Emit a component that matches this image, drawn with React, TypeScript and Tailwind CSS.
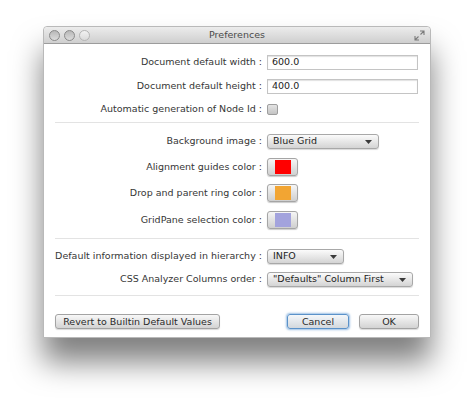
import React from 'react';

const font = { fontFamily: '"DejaVu Sans", Verdana, sans-serif' };

function Label({ children }: { children: React.ReactNode }) {
    return <div className="w-[223px] shrink-0 pr-[5px] text-right text-[#363636] whitespace-nowrap">{children} :</div>;
}

function Select({ value, width }: { value: string; width: string }) {
    return (
        <div className={`${width} h-[15px] flex items-center justify-between pl-[5px] pr-[6px] rounded-[3px] border border-[#a8a8a8] bg-gradient-to-b from-[#fbfbfb] to-[#d4d4d4] shadow-[0_1px_1px_rgba(0,0,0,0.15)] text-[#222]`}>
            <span>{value}</span>
            <svg width="7" height="4" viewBox="0 0 7 4"><path d="M0 0h7L3.5 4z" fill="#3a3a3a" /></svg>
        </div>
    );
}

function Swatch({ color }: { color: string }) {
    return (
        <div className="w-[31px] h-[18px] flex items-center justify-center rounded-[3px] border border-[#a5a5a5] bg-gradient-to-b from-[#f6f6f6] to-[#cfcfcf] shadow-[0_1px_1px_rgba(0,0,0,0.2)]">
            <div className="w-[16px] h-[14px]" style={{ backgroundColor: color }} />
        </div>
    );
}

function Field({ value }: { value: string }) {
    return (
        <div className="w-[151px] h-[15px] flex items-center pl-[4px] bg-white border border-[#c4c4c4] shadow-[inset_0_1px_1px_rgba(0,0,0,0.12)] text-[#222]">
            {value}
        </div>
    );
}

function Sep() {
    return <div className="mx-[11px] h-px bg-[#e3e3e3]" />;
}

function Light({ faint }: { faint?: boolean }) {
    return (
        <div
            className={`w-[11px] h-[11px] rounded-full border ${faint ? 'border-[#b5b5b5] bg-gradient-to-b from-[#f2f2f2] to-[#dadada]' : 'border-[#8a8a8a] bg-gradient-to-b from-[#b8b8b8] to-[#dcdcdc]'}`}
        />
    );
}

export default function App() {
    return (
        <div className="w-[474px] h-[399px] bg-white pt-[26px] pl-[43px] text-[9.5px]" style={font}>
            <div className="w-[388px] h-[312px] flex flex-col bg-white border border-[#b9b9b9] rounded-t-[4px] shadow-[0_24px_30px_rgba(0,0,0,0.5)]">
                <div className="h-[17px] shrink-0 relative flex items-center justify-center rounded-t-[4px] bg-gradient-to-b from-[#ececec] to-[#cfcfcf] border-b border-[#9c9c9c]">
                    <div className="absolute left-[5px] top-[3px] flex gap-[4px]">
                        <Light />
                        <Light />
                        <Light faint />
                    </div>
                    <span className="text-[#4a4a4a] text-[9.5px]">Preferences</span>
                    <svg className="absolute right-[5px] top-[3px]" width="11" height="11" viewBox="0 0 11 11">
                        <path d="M6 1h4v4M10 1L6.5 4.5M5 10H1V6M1 10l3.5-3.5" stroke="#7a7a7a" strokeWidth="1.1" fill="none" />
                    </svg>
                </div>

                <div className="flex flex-col pt-[11px]">
                    <div className="flex items-center h-[15px]">
                        <Label>Document default width</Label>
                        <Field value="600.0" />
                    </div>
                    <div className="flex items-center h-[15px] mt-[9px]">
                        <Label>Document default height</Label>
                        <Field value="400.0" />
                    </div>
                    <div className="flex items-center h-[11px] mt-[10px]">
                        <Label>Automatic generation of Node Id</Label>
                        <div className="w-[11px] h-[11px] rounded-[2px] border border-[#9e9e9e] bg-gradient-to-b from-[#e4e4e4] to-[#c4c4c4]" />
                    </div>
                    <div className="mt-[7px]">
                        <Sep />
                    </div>
                    <div className="flex items-center h-[15px] mt-[11px]">
                        <Label>Background image</Label>
                        <Select value="Blue Grid" width="w-[112px]" />
                    </div>
                    <div className="flex items-center h-[18px] mt-[9px]">
                        <Label>Alignment guides color</Label>
                        <Swatch color="#ff0000" />
                    </div>
                    <div className="flex items-center h-[18px] mt-[8px]">
                        <Label>Drop and parent ring color</Label>
                        <Swatch color="#f2a533" />
                    </div>
                    <div className="flex items-center h-[18px] mt-[9px]">
                        <Label>GridPane selection color</Label>
                        <Swatch color="#a3a3dd" />
                    </div>
                    <div className="mt-[9px]">
                        <Sep />
                    </div>
                    <div className="flex items-center h-[15px] mt-[10px]">
                        <Label>Default information displayed in hierarchy</Label>
                        <Select value="INFO" width="w-[77px]" />
                    </div>
                    <div className="flex items-center h-[15px] mt-[8px]">
                        <Label>CSS Analyzer Columns order</Label>
                        <Select value={'"Defaults" Column First'} width="w-[146px]" />
                    </div>
                    <div className="mt-[8px]">
                        <Sep />
                    </div>
                    <div className="flex items-center mt-[18px] px-[11px]">
                        <button className="w-[165px] h-[15px] rounded-[3px] border border-[#a3a3a3] bg-gradient-to-b from-[#f8f8f8] to-[#d3d3d3] shadow-[0_1px_1px_rgba(0,0,0,0.15)] text-[#2a2a2a]">
                            Revert to Builtin Default Values
                        </button>
                        <button className="ml-auto w-[62px] h-[15px] rounded-[3px] border border-[#5b92c9] bg-gradient-to-b from-[#f4f7fa] to-[#d3d8dd] shadow-[0_0_2px_1px_rgba(90,150,210,0.6)] text-[#2a2a2a]">
                            Cancel
                        </button>
                        <button className="ml-[10px] w-[60px] h-[15px] rounded-[3px] border border-[#a3a3a3] bg-gradient-to-b from-[#f8f8f8] to-[#d3d3d3] shadow-[0_1px_1px_rgba(0,0,0,0.15)] text-[#2a2a2a]">
                            OK
                        </button>
                    </div>
                </div>
            </div>
        </div>
    );
}
